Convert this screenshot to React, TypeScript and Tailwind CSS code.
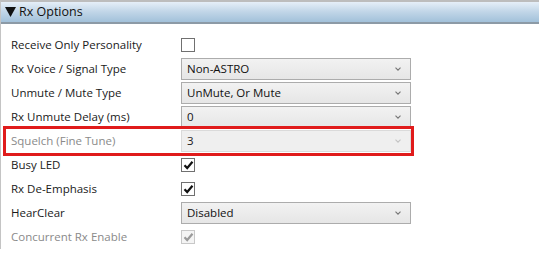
import React from 'react';

type Row =
  | { label: string; kind: 'check'; checked: boolean; disabled?: boolean }
  | { label: string; kind: 'select'; value: string; disabled?: boolean };

const ROWS: Row[] = [
  { label: 'Receive Only Personality', kind: 'check', checked: false },
  { label: 'Rx Voice / Signal Type', kind: 'select', value: 'Non-ASTRO' },
  { label: 'Unmute / Mute Type', kind: 'select', value: 'UnMute, Or Mute' },
  { label: 'Rx Unmute Delay (ms)', kind: 'select', value: '0' },
  { label: 'Squelch (Fine Tune)', kind: 'select', value: '3', disabled: true },
  { label: 'Busy LED', kind: 'check', checked: true },
  { label: 'Rx De-Emphasis', kind: 'check', checked: true },
  { label: 'HearClear', kind: 'select', value: 'Disabled' },
  { label: 'Concurrent Rx Enable', kind: 'check', checked: true, disabled: true },
];

function Check({ checked, disabled }: { checked: boolean; disabled?: boolean }) {
  return (
    <div
      className={`w-[14px] h-[14px] border flex items-center justify-center ${
        disabled ? 'border-[#c8c8c8] bg-[#f4f4f4]' : 'border-[#707070] bg-white'
      }`}
    >
      {checked && (
        <svg width="11" height="10" viewBox="0 0 11 10">
          <path
            d="M1.5 5.2 L4.2 8 L9.5 1.8"
            fill="none"
            stroke={disabled ? '#9a9a9a' : '#111'}
            strokeWidth="2.2"
          />
        </svg>
      )}
    </div>
  );
}

function Select({ value, disabled }: { value: string; disabled?: boolean }) {
  return (
    <div
      className={`w-[230px] h-[22px] border flex items-center justify-between pl-[5px] pr-[9px] ${
        disabled
          ? 'border-[#dadada] bg-[#efefef] text-[#222]'
          : 'border-[#acacac] bg-gradient-to-b from-[#f2f2f2] to-[#e6e6e6] text-[#111]'
      }`}
    >
      <span>{value}</span>
      <svg width="6" height="4" viewBox="0 0 6 4">
        <path d="M0.5 0.6 L3 3.2 L5.5 0.6" fill="none" stroke={disabled ? '#c4c4c4' : '#777'} strokeWidth="1.1" />
      </svg>
    </div>
  );
}

export default function App() {
  return (
    <div className="w-[539px] h-[256px] bg-white overflow-hidden text-[11.5px] font-['Open_Sans','Lato',sans-serif]">
      <div className="border-t-2 border-[#bdbdbd] border-l border-l-[#c4c4c4]">
        <div className="h-[22px] flex items-center pl-[4px] text-[#111] text-[12.5px] bg-gradient-to-b from-[#e6eff8] via-[#c0d5e7] to-[#a2c1da] border-b-2 border-[#8c9aa6]">
          <svg width="11" height="10" viewBox="0 0 11 10" className="mr-[3px]">
            <path d="M0 0 H11 L5.5 10 Z" fill="#111" />
          </svg>
          <span>Rx Options</span>
        </div>
        <div className="pt-[9px] flex flex-col">
          {ROWS.map((r) => {
            const hl = r.label === 'Squelch (Fine Tune)';
            return (
              <div
                key={r.label}
                className={`h-[24px] flex items-center ${
                  hl ? 'border-[3px] border-[#e01b1b] ml-[2px] w-[411px] pl-[5px] h-[30px] -my-[3px]' : 'pl-[10px]'
                }`}
              >
                <div className={`w-[170px] ${r.disabled ? 'text-[#8a8a8a]' : 'text-[#1a1a1a]'}`}>{r.label}</div>
                {r.kind === 'check' ? (
                  <Check checked={r.checked} disabled={r.disabled} />
                ) : (
                  <Select value={r.value} disabled={r.disabled} />
                )}
              </div>
            );
          })}
        </div>
      </div>
    </div>
  );
}
